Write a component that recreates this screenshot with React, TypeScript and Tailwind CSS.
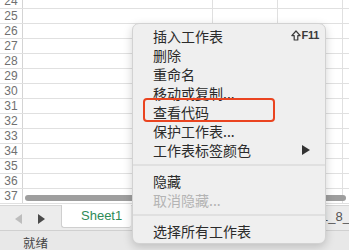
import React from 'react'

const rows = [24, 25, 26, 27, 28, 29, 30, 31, 32, 33, 34, 35, 36, 37]

type TItem = { label: string; shortcut?: boolean; submenu?: boolean; disabled?: boolean } | 'sep'

const items: TItem[] = [
  { label: '插入工作表', shortcut: true },
  { label: '删除' },
  { label: '重命名' },
  { label: '移动或复制...' },
  { label: '查看代码' },
  { label: '保护工作表...' },
  { label: '工作表标签颜色', submenu: true },
  'sep',
  { label: '隐藏' },
  { label: '取消隐藏...', disabled: true },
  'sep',
  { label: '选择所有工作表' },
]

const cjk = "font-['Noto_Sans_CJK_SC','Noto_Sans',sans-serif]"

const SheetGrid = () => (
  <div className="h-[205px] overflow-hidden bg-white">
    <div className="mt-[-6px]">
      {rows.map((r) => (
        <div key={r} className="flex h-[15px] border-b border-[#e0e0e0]">
          <div className="w-[23px] shrink-0 border-r border-[#d4d4d4] flex items-center justify-center text-[12px] leading-none text-[#707070] font-['Liberation_Sans',sans-serif]">
            {r}
          </div>
          <div className="w-[190px] shrink-0 border-r border-[#e0e0e0]" />
          <div className="w-[65px] shrink-0 border-r border-[#e0e0e0]" />
          <div className="w-[65px] shrink-0 border-r border-[#e0e0e0]" />
          <div className="flex-1" />
        </div>
      ))}
    </div>
  </div>
)

const TabBar = () => (
  <div className="flex h-[25px] bg-[#ececec] border-t border-[#d6d6d6]">
    <div className="w-[61px] shrink-0 flex items-center pl-[15px] gap-[16px] pt-[2px]">
      <svg width="7" height="10" viewBox="0 0 7 10">
        <polygon points="7,0 7,10 0,5" fill="#bdbdbd" />
      </svg>
      <svg width="7" height="10" viewBox="0 0 7 10">
        <polygon points="0,0 0,10 7,5" fill="#4a4a4a" />
      </svg>
    </div>
    <div className="w-[70px] shrink-0 mt-[-1px] h-[23px] bg-white border-l border-b border-[#cfcfcf] rounded-b-[3px] pl-[19px] flex items-center text-[13px] text-[#2e8b57] font-['Liberation_Sans',sans-serif]">
      Sheet1
    </div>
    <div className="flex-1 flex items-center pb-[3px] pl-[156px] text-[13px] text-[#555] font-['Liberation_Sans',sans-serif] whitespace-nowrap overflow-hidden">
      Sheet1_8_0
    </div>
  </div>
)

const ShiftIcon = () => (
  <svg width="10" height="11" viewBox="0 0 10 11" className="mr-[1px]">
    <path d="M5 1 L9.2 5.6 H6.8 V10 H3.2 V5.6 H0.8 Z" fill="none" stroke="#3a3a3a" strokeWidth="1.2" strokeLinejoin="round" />
  </svg>
)

const ContextMenu = () => (
  <div
    className={`absolute left-[132px] top-[23px] w-[194px] h-[221px] bg-[#efefef] border border-[#d2d2d2] rounded-[7px] shadow-[0_3px_10px_rgba(0,0,0,0.18)] pt-[2px] ${cjk}`}
  >
    {items.map((it, i) =>
      it === 'sep' ? (
        <div key={i} className="h-[12px] flex items-center">
          <div className="h-[2px] w-full bg-[#e0e0e0]" />
        </div>
      ) : (
        <div
          key={i}
          className={`h-[19px] flex items-center pl-[20px] pr-[6px] text-[14px] leading-none ${
            it.disabled ? 'text-[#b4b4b4]' : 'text-[#2b2b2b]'
          }`}
        >
          <span className="flex-1 whitespace-nowrap">{it.label}</span>
          {it.shortcut && (
            <span className="flex items-center text-[#3a3a3a] font-['Liberation_Sans',sans-serif]">
              <ShiftIcon />
              <span className="text-[11px] font-semibold tracking-[-0.3px]">F11</span>
            </span>
          )}
          {it.submenu && (
            <svg width="8" height="10" viewBox="0 0 8 10" className="mr-[9px]">
              <polygon points="0,0 0,10 8,5" fill="#333" />
            </svg>
          )}
        </div>
      )
    )}
  </div>
)

export default function App() {
  return (
    <div className="relative w-[349px] h-[250px] overflow-hidden bg-white">
      <SheetGrid />
      <div className="absolute left-[25px] top-[195px] w-[321px] h-[6px] rounded-full bg-[#9e9e9e]" />
      <TabBar />
      <div className={`h-[20px] bg-[#e8e8e8] border-t border-[#d0d0d0] pl-[23px] pt-[6px] text-[12.5px] leading-none text-[#444] ${cjk}`}>
        就绪
      </div>
      <ContextMenu />
      <div className="absolute left-[143px] top-[98px] w-[132px] h-[24px] border-2 border-[#ea4420] rounded-[4px]" />
    </div>
  )
}
